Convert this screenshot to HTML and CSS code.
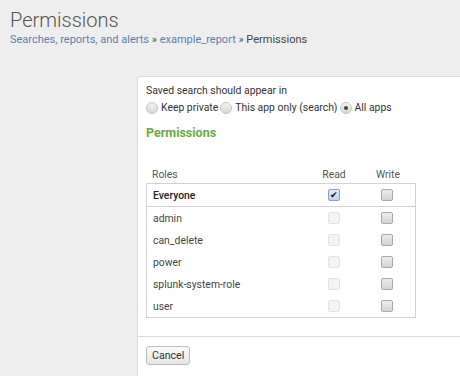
FILE: index.html
```html
<!DOCTYPE html>
<html>
<head>
<meta charset="utf-8">
<link rel="stylesheet" href="styles.css">
</head>
<body>
<div class="header">
  <h1 class="title">Permissions</h1>
  <div class="crumbs"><a class="crumb">Searches, reports, and alerts</a> » <a class="crumb">example_report</a> » <span class="current">Permissions</span></div>
</div>
<div class="panel">
  <div class="body">
    <div class="label">Saved search should appear in</div>
    <div class="radios">
      <span class="radio"></span><span class="rlabel">Keep private</span>
      <span class="radio"></span><span class="rlabel">This app only (search)</span>
      <span class="radio on"></span><span class="rlabel">All apps</span>
    </div>
    <div class="heading">Permissions</div>
    <div class="thead">
      <span class="c-role">Roles</span><span class="c-read">Read</span><span class="c-write">Write</span>
    </div>
    <div class="table">
      <div class="row first">
        <span class="c-role strong">Everyone</span>
        <span class="c-read"><span class="cb checked">&#10004;</span></span>
        <span class="c-write"><span class="cb"></span></span>
      </div>
      <div class="row">
        <span class="c-role">admin</span>
        <span class="c-read"><span class="cb dis"></span></span>
        <span class="c-write"><span class="cb"></span></span>
      </div>
      <div class="row">
        <span class="c-role">can_delete</span>
        <span class="c-read"><span class="cb dis"></span></span>
        <span class="c-write"><span class="cb"></span></span>
      </div>
      <div class="row">
        <span class="c-role">power</span>
        <span class="c-read"><span class="cb dis"></span></span>
        <span class="c-write"><span class="cb"></span></span>
      </div>
      <div class="row">
        <span class="c-role">splunk-system-role</span>
        <span class="c-read"><span class="cb dis"></span></span>
        <span class="c-write"><span class="cb"></span></span>
      </div>
      <div class="row">
        <span class="c-role">user</span>
        <span class="c-read"><span class="cb dis"></span></span>
        <span class="c-write"><span class="cb"></span></span>
      </div>
    </div>
  </div>
  <div class="footer">
    <button class="btn">Cancel</button>
  </div>
</div>
</body>
</html>
```
FILE: styles.css
```css
html, body {
  margin: 0;
  padding: 0;
}
body {
  background: #eeeeee;
  font-family: Roboto, "Liberation Sans", sans-serif;
  font-size: 11px;
  color: #333;
  overflow: hidden;
  width: 460px;
  height: 376px;
}
.header {
  padding: 8px 10px 0 10px;
}
.title {
  margin: 0;
  font-size: 20px;
  line-height: 24px;
  font-weight: 300;
  color: #555;
}
.crumbs {
  margin-top: 1px;
  line-height: 14px;
  font-size: 11px;
  color: #555;
}
.crumb {
  color: #5a7fb0;
}
.current {
  color: #444;
}
.panel {
  margin-top: 29px;
  margin-left: 137px;
  background: #fff;
  border: 1px solid #dcdcdc;
  border-right: none;
  border-radius: 3px 0 0 0;
  font-size: 10.4px;
}
.body {
  padding: 6px 9px 18px 8px;
}
.label {
  line-height: 15px;
}
.radios {
  margin-top: 2px;
  line-height: 16px;
  display: flex;
  align-items: center;
}
.radio {
  width: 10px;
  height: 10px;
  border-radius: 50%;
  border: 1px solid #c4c4c4;
  background: linear-gradient(#f4f4f4, #d8d8d8);
  margin-right: 3px;
  position: relative;
  flex: none;
}
.radio.on::after {
  content: "";
  position: absolute;
  left: 3px;
  top: 3px;
  width: 4px;
  height: 4px;
  border-radius: 50%;
  background: #444;
}
.rlabel {
  margin-right: 2px;
}
.heading {
  margin-top: 8px;
  line-height: 18px;
  font-size: 12.5px;
  font-weight: 700;
  color: #6aab3d;
}
.thead {
  margin-top: 23px;
  height: 18px;
  display: flex;
  align-items: center;
  color: #555;
  width: 270px;
}
.c-role {
  width: 156px;
  padding-left: 6px;
}
.c-read {
  width: 52px;
  display: flex;
  justify-content: center;
}
.c-write {
  width: 56px;
  display: flex;
  justify-content: center;
}
.table {
  width: 268px;
  border: 1px solid #d2d2d2;
}
.row {
  height: 22px;
  display: flex;
  align-items: center;
  color: #444;
}
.row.first {
  border-bottom: 1px solid #d2d2d2;
}
.strong {
  font-weight: 500;
  color: #222;
}
.cb {
  width: 10px;
  height: 10px;
  border: 1px solid #a9a9a9;
  border-radius: 2px;
  background: linear-gradient(#ececec, #d4d4d4);
  display: flex;
  align-items: center;
  justify-content: center;
  font-size: 9px;
  line-height: 10px;
  color: #111;
}
.cb.dis {
  border-color: #e2e2e2;
  background: #f3f3f3;
}
.cb.checked {
  border-color: #8aa0c8;
  background: linear-gradient(#e4eaf6, #c7d3ea);
}
.footer {
  border-top: 1px solid #dcdcdc;
  padding: 9px 9px 20px 8px;
}
.btn {
  font-family: Roboto, "Liberation Sans", sans-serif;
  font-size: 10.6px;
  color: #333;
  height: 19px;
  padding: 0 5px;
  border: 1px solid #bdbdbd;
  border-radius: 3px;
  background: linear-gradient(#fafafa, #e6e6e6);
  line-height: 17px;
}
```
